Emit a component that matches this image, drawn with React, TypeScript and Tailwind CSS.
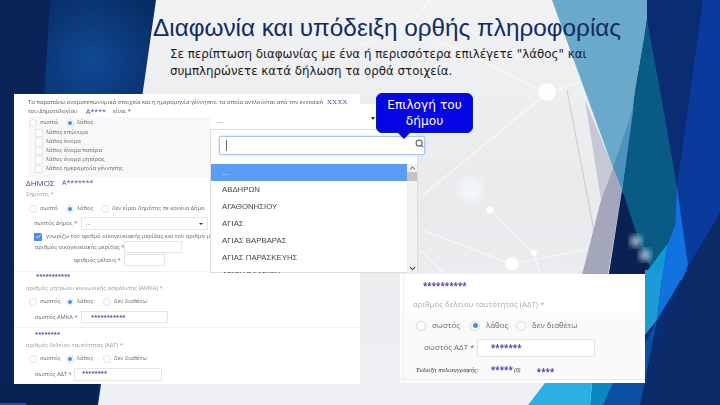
import { ChevronDown, ChevronUp, Search, Check } from 'lucide-react'

const sans = "font-['Open_Sans','Noto_Sans',sans-serif]"

function Background() {
  return (
    <svg className="absolute inset-0" width="720" height="405" viewBox="0 0 720 405">
      <defs>
        <radialGradient id="glow" cx="90" cy="62" r="85" gradientUnits="userSpaceOnUse">
          <stop offset="0" stopColor="#0f4a94" />
          <stop offset="1" stopColor="#082a62" />
        </radialGradient>
        <linearGradient id="page" x1="0" y1="0" x2="0" y2="1">
          <stop offset="0" stopColor="#f1f2f4" />
          <stop offset="0.5" stopColor="#e9eaec" />
          <stop offset="1" stopColor="#eef0f3" />
        </linearGradient>
        <filter id="soft"><feGaussianBlur stdDeviation="3" /></filter>
      </defs>
      <rect width="720" height="405" fill="url(#page)" />

      {/* left wedge */}
      <polygon points="0,0 156,0 98,405 0,405" fill="url(#glow)" />
      <polygon points="0,0 50,0 25,405 0,405" fill="#0a2358" />
      <polygon points="0,384 98,384 96,405 0,405" fill="#08224f" />
      <polygon points="0,403 26,403 26,405 0,405" fill="#1254b0" />

      {/* network */}
      <g stroke="#ffffff" strokeWidth="1.1" opacity="0.65" fill="none">
        <path d="M430 0 L410 27 L547 93 L423 195" />
        <path d="M547 93 L582 82" />
        <path d="M410 27 L360 45" />
        <path d="M490 210 L534 253 L540 275" />
        <path d="M422 230 L512 264 L637 240" />
        <path d="M420 250 L445 275" />
      </g>
      <g fill="#ffffff">
        <circle cx="410" cy="27" r="6" opacity="0.6" />
        <circle cx="547" cy="92" r="9" opacity="0.9" />
        <circle cx="490" cy="210" r="3.5" />
        <circle cx="534" cy="253" r="3" />
        <circle cx="512" cy="264" r="6.5" />
      </g>
      <circle cx="471" cy="190" r="12" fill="#f3f6f9" filter="url(#soft)" />
      <path d="M567 90 L603 278" stroke="#9a9da4" strokeWidth="0.6" opacity="0.7" fill="none" />

      {/* right shards */}
      <polygon points="647,0 720,0 720,405 603,405 608,280 640,100" fill="#0a2c72" />
      <polygon points="703,0 720,0 720,213 685,272 677,187" fill="#0a3a9c" />
      <polygon points="720,213 720,405 640,405 685,272" fill="#0a2a68" />
      <polygon points="552,0 647,0 647,20 635,90 622,190 613,168" fill="#6aa9c9" />
      <polygon points="647,20 660,90 677,187 675,225 640,245 622,190 635,90" fill="#0a5a86" />
      <polygon points="634,105 613,168 622,190" fill="#4d93bd" />
      <polygon points="585,100 613,168 601,200" fill="#c6c9d5" />
      <polygon points="613,168 622,190 608,275 582,275 601,200" fill="#a3a7bb" />
      <polygon points="622,190 640,245 662,265 640,280 608,280" fill="#0a2152" />
      <polygon points="640,245 675,225 668,243 650,267" fill="#0a5a86" />
      <polygon points="650,267 668,243 662,280 640,280" fill="#0d9bd0" />
      <polygon points="677,187 688,265 682,280 662,280 668,243 675,225" fill="#1272e0" />
      <circle cx="636" cy="241" r="6" fill="#9fb8d0" filter="url(#soft)" />
      <circle cx="645" cy="255" r="6" fill="#9fb8d0" filter="url(#soft)" />
      <polygon points="645,270 663,270 657,320 645,335" fill="#1c9bd8" />
      <polygon points="663,270 687,270 657,320" fill="#1272e0" />
      <polygon points="613,383 645,383 645,343 657,320 640,405 603,405" fill="#0a4fa0" />
      <polygon points="592,383 613,383 603,405 590,405" fill="#0a86c2" />
      <polygon points="545,383 592,383 590,405 528,405" fill="#2cb0e4" />
    </svg>
  )
}

function Radio({ on, label, big }: { on?: boolean; label: string; big?: boolean }) {
  return (
    <span className={`flex items-center ${big ? 'gap-[6px]' : 'gap-[3px]'}`}>
      <span
        className={`flex shrink-0 items-center justify-center rounded-full border bg-white ${
          big ? 'h-[10px] w-[10px] border-[#d8d8d8]' : 'h-[8px] w-[8px] border-[#e2e2e2]'
        } ${on ? 'border-[#8cbcf0]' : ''}`}
      >
        {on && <span className={`rounded-full bg-[#3d8fe8] ${big ? 'h-[5px] w-[5px]' : 'h-[4px] w-[4px]'}`} />}
      </span>
      <span className="whitespace-nowrap">{label}</span>
    </span>
  )
}

function CheckRow({ label }: { label: string }) {
  return (
    <div className="flex h-[9px] items-center gap-[3px]">
      <span className="h-[8px] w-[8px] border border-[#e4e4e4] bg-white" />
      <span>{label}</span>
    </div>
  )
}

function Stars({ children, className = '' }: { children: string; className?: string }) {
  return <span className={`font-bold text-[#4a48b0] ${className}`}>{children}</span>
}

function LeftForm() {
  return (
    <div className={`absolute left-[14px] top-[94px] h-[290px] w-[346px] overflow-hidden bg-white text-[5.75px] leading-[9px] text-[#666] blur-[0.35px] ${sans}`}>
      <div className="pl-[14px] pt-[4px] text-[#555]">
        <div className="flex h-[9px] items-center gap-[4px] whitespace-nowrap">
          Τα παραπάνω ονοματεπωνυμικά στοιχεία και η ημερομηνία γέννησης, τα οποία αντλούνται από την εγγραφή
          <span className="font-['Liberation_Serif',serif] text-[7px] text-[#4a48b0]">XXXX</span>
        </div>
        <div className="flex h-[9px] items-center whitespace-nowrap">
          <span className="w-[58px]">του Δημοτολογίου</span>
          <span className="w-[27px] text-[7px] text-[#4a48b0]">Α****</span>
          <span>είναι *</span>
        </div>
      </div>

      <div className="ml-[14px] mt-[1px] h-[60px] w-[183px] bg-[#f8f8f8] pl-[1px] pt-[1px]">
        <div className="flex h-[9px] items-center">
          <span className="w-[37px]"><Radio label="σωστά" /></span>
          <Radio on label="λάθος" />
        </div>
        <div className="mt-[1px] flex flex-col pl-[6px]">
          <CheckRow label="λάθος επώνυμο" />
          <CheckRow label="λάθος όνομα" />
          <CheckRow label="λάθος όνομα πατέρα" />
          <CheckRow label="λάθος όνομα μητέρας" />
          <CheckRow label="λάθος ημερομηνία γέννησης" />
        </div>
      </div>

      <div className="mt-[1px] flex h-[9px] items-center pl-[12px] text-[8px] text-[#2d4a8c]">
        <span className="w-[36px]">ΔΗΜΟΣ</span>
        <span className="text-[7px] text-[#4a48b0]">Α*******</span>
      </div>
      <div className="mt-[3px] h-[9px] pl-[12px] text-[#999]">δημότης *</div>

      <div className="ml-[14px] mt-[1px] h-[71px] w-[194px] pl-[1px] pt-[4px]">
        <div className="flex h-[9px] items-center">
          <span className="w-[37px]"><Radio label="σωστό" /></span>
          <span className="w-[35px]"><Radio on label="λάθος" /></span>
          <Radio label="δεν είμαι δημότης σε κανένα Δήμο" />
        </div>
        <div className="mt-[4px] flex items-center pl-[5px]">
          <span className="w-[47px] shrink-0">σωστός Δήμος *</span>
          <span className="flex h-[13px] w-[127px] items-center justify-between border border-[#e6e6e6] bg-white pl-[4px] pr-[4px]">
            ...
            <span className="h-0 w-0 border-x-[2px] border-t-[2.5px] border-x-transparent border-t-[#333]" />
          </span>
        </div>
        <div className="mt-[2px] flex h-[9px] items-center gap-[4px] whitespace-nowrap pl-[5px]">
          <span className="flex h-[8px] w-[8px] shrink-0 items-center justify-center rounded-[1px] bg-[#3d8fe8]">
            <Check className="h-[7px] w-[7px] text-white" strokeWidth={3} />
          </span>
          γνωρίζω τον αριθμό οικογενειακής μερίδας και τον αριθμό μέλους
        </div>
        <div className="flex flex-col gap-[1px] pl-[6px]">
          <div className="flex items-center">
            <span className="w-[89px] shrink-0 whitespace-nowrap">αριθμός οικογενειακής μερίδας *</span>
            <span className="h-[12px] w-[58px] border border-[#e6e6e6] bg-white" />
          </div>
          <div className="flex items-center">
            <span className="w-[89px] shrink-0 pr-[3px] text-right">αριθμός μέλους *</span>
            <span className="h-[12px] w-[41px] border border-[#e6e6e6] bg-white" />
          </div>
        </div>
      </div>

      <div className="border-t border-[#f0f0f0] pl-[22px]">
        <Stars>***********</Stars>
      </div>
      <div className="mt-[3px] h-[9px] pl-[12px] text-[#999]">αριθμός μητρώου κοινωνικής ασφάλισης (ΑΜΚΑ) *</div>
      <div className="mt-[4px] flex h-[9px] items-center pl-[15px]">
        <span className="w-[37px]"><Radio label="σωστός" /></span>
        <span className="w-[37px]"><Radio on label="λάθος" /></span>
        <Radio label="δεν διαθέτω" />
      </div>
      <div className="mt-[5px] flex items-center pl-[21px]">
        <span className="w-[46px] shrink-0 whitespace-nowrap">σωστός ΑΜΚΑ *</span>
        <span className="flex h-[12px] w-[87px] items-center border border-[#e6e6e6] bg-white pl-[9px]">
          <Stars>***********</Stars>
        </span>
      </div>
      <div className="mt-[4px] border-t border-[#f0f0f0] pl-[21px] pt-[2px]">
        <Stars>********</Stars>
      </div>
      <div className="mt-[2px] h-[9px] pl-[12px] text-[#999]">αριθμός δελτίου ταυτότητας (ΑΔΤ) *</div>
      <div className="mt-[4px] flex h-[9px] items-center pl-[15px]">
        <span className="w-[37px]"><Radio label="σωστός" /></span>
        <span className="w-[37px]"><Radio on label="λάθος" /></span>
        <Radio label="δεν διαθέτω" />
      </div>
      <div className="mt-[5px] flex items-center pl-[21px]">
        <span className="w-[39px] shrink-0 whitespace-nowrap">σωστός ΑΔΤ *</span>
        <span className="flex h-[13px] w-[88px] items-start border border-[#e6e6e6] bg-white pl-[7px]">
          <Stars>********</Stars>
        </span>
      </div>
    </div>
  )
}

const municipalities = ['ΑΒΔΗΡΩΝ', 'ΑΓΑΘΟΝΗΣΙΟΥ', 'ΑΓΙΑΣ', 'ΑΓΙΑΣ ΒΑΡΒΑΡΑΣ', 'ΑΓΙΑΣ ΠΑΡΑΣΚΕΥΗΣ', 'ΑΓΙΟΥ ΒΛΑΣΙΟΥ']

function Dropdown() {
  return (
    <div className="absolute left-[210px] top-[104px] w-[208px] font-['Liberation_Sans',sans-serif] text-[#444]">
      <div className="flex h-[26px] w-[168px] items-end justify-between border-b border-[#ddd] bg-white pb-[3px] pl-[7px] pr-[3px] text-[7px] blur-[0.3px]">
        ...
        <span className="mb-[6px] h-0 w-0 border-x-[2.5px] border-t-[3px] border-x-transparent border-t-[#333]" />
      </div>
      <div className="h-[143px] border border-t-0 border-[#ddd] bg-white blur-[0.25px]">
        <div className="pb-[9px] pl-[8px] pt-[6px]">
          <div className="flex h-[19px] w-[206px] items-center rounded-[2px] border border-[#a8c8ee] bg-white pl-[6px] shadow-[0_0_2px_#a8c8ee]">
            <span className="h-[11px] w-px bg-[#666]" />
          </div>
        </div>
        <div className="flex">
          <div className="h-[109px] w-[197px] overflow-hidden text-[7.8px]">
            <div className="flex h-[17px] items-center bg-[#5b9cf5] pl-[11px] text-white">...</div>
            {municipalities.map((m) => (
              <div key={m} className="flex h-[17px] items-center whitespace-nowrap pl-[11px]">{m}</div>
            ))}
          </div>
          <div className="flex h-[109px] w-[10px] flex-col items-center justify-between bg-[#f1f1f1]">
            <div className="flex w-full flex-col items-center">
              <ChevronUp className="h-[8px] w-[9px] text-[#444]" strokeWidth={3} />
              <div className="h-[9px] w-full bg-[#c4c4c4]" />
            </div>
            <ChevronDown className="h-[9px] w-[9px] text-[#444]" strokeWidth={3} />
          </div>
        </div>
      </div>
      <Search className="absolute left-[205px] top-[35px] h-[9px] w-[9px] text-[#666]" strokeWidth={3} />
    </div>
  )
}

function Callout() {
  return (
    <div className="absolute left-[376px] top-[93px] flex h-[40px] w-[97px] items-center justify-center rounded-[6px] border border-[#0a1a9a] bg-[#0505e6] text-center font-['DejaVu_Sans',sans-serif] text-[12.2px] leading-[16px] text-white">
      <span>Επιλογή του<br />δήμου</span>
      <span className="absolute left-[21px] top-[39px] h-0 w-0 border-x-[6px] border-t-[6px] border-x-transparent border-t-[#0505e6]" />
    </div>
  )
}

function RightForm() {
  return (
    <div className={`absolute left-[400px] top-[274px] h-[109px] w-[245px] overflow-hidden bg-white text-[7.9px] text-[#666] blur-[0.25px] ${sans}`}>
      <div className="absolute bottom-0 left-[3px] top-0 w-px bg-[#eee]" />
      <div className="flex h-[24px] items-center pl-[23px] text-[8px]">
        <Stars>**********</Stars>
      </div>
      <div className="flex h-[14px] items-center whitespace-nowrap pl-[13px] text-[7.8px] text-[#aaa]">αριθμός δελτίου ταυτότητας (ΑΔΤ) *</div>
      <div className="mt-[1px] h-[66px] bg-[#fafafa] pl-[16px] pt-[6px]">
        <div className="flex h-[14px] items-center">
          <span className="w-[54px]"><Radio big label="σωστός" /></span>
          <span className="w-[46px]"><Radio big on label="λάθος" /></span>
          <Radio big label="δεν διαθέτω" />
        </div>
        <div className="mt-[6px] flex items-center pl-[8px]">
          <span className="w-[53px] shrink-0 whitespace-nowrap">σωστός ΑΔΤ *</span>
          <span className="flex h-[18px] w-[118px] items-center border border-[#e4e4e4] bg-white pl-[13px] text-[8px]">
            <Stars>*******</Stars>
          </span>
        </div>
        <div className="mt-[6px] flex h-[14px] items-center text-[6px] italic text-[#333]">
          <span className="w-[75px] whitespace-nowrap">Ένδειξη πολυεγγραφής:</span>
          <Stars className="text-[8px] not-italic">*****</Stars>
          <span className="ml-[1px] w-[23px]">(0)</span>
          <Stars className="mt-[4px] text-[8px] not-italic">****</Stars>
        </div>
      </div>
      <div className="border-t border-[#e8e8e8]" />
    </div>
  )
}

export default function App() {
  return (
    <div className="relative h-[405px] w-[720px] overflow-hidden">
      <Background />

      <h1 className="absolute left-[153px] top-[10px] whitespace-nowrap font-['Liberation_Sans',sans-serif] text-[24.3px] leading-[36px] text-[#122a66]">
        Διαφωνία και υπόδειξη ορθής πληροφορίας
      </h1>
      <p className="absolute left-[170px] top-[46px] whitespace-nowrap font-['DejaVu_Sans',sans-serif] text-[11.85px] leading-[17px] text-[#1a1a1a]">
        Σε περίπτωση διαφωνίας με ένα ή περισσότερα επιλέγετε "λάθος" και<br />
        συμπληρώνετε κατά δήλωση τα ορθά στοιχεία.
      </p>

      <LeftForm />
      <RightForm />
      <Dropdown />
      <Callout />
    </div>
  )
}
